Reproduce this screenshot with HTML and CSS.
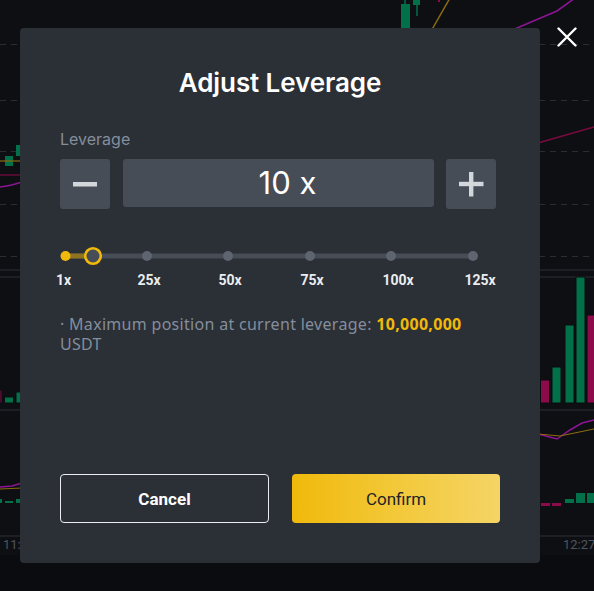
FILE: index.html
```html
<!DOCTYPE html>
<html lang="en">
<head>
<meta charset="utf-8">
<title>Adjust Leverage</title>
<link rel="stylesheet" href="styles.css">
</head>
<body>
<div class="screen">
  <svg class="chart" width="594" height="591" viewBox="0 0 594 591" xmlns="http://www.w3.org/2000/svg">
    <rect x="0" y="0" width="594" height="555" fill="#0e0f13"/>
    <rect x="0" y="555" width="594" height="36" fill="#0b0c0f"/>
    <g stroke="#2a2d33" stroke-width="1" stroke-dasharray="6 5">
      <line x1="0" y1="44.5" x2="594" y2="44.5"/>
      <line x1="0" y1="100.5" x2="594" y2="100.5"/>
      <line x1="0" y1="151.5" x2="594" y2="151.5"/>
      <line x1="0" y1="204.5" x2="594" y2="204.5"/>
      <line x1="0" y1="256.5" x2="594" y2="256.5"/>
    </g>
    <g stroke="#23262c" stroke-width="1.5">
      <line x1="0" y1="270" x2="594" y2="270"/>
      <line x1="0" y1="277" x2="594" y2="277"/>
      <line x1="0" y1="410" x2="594" y2="410"/>
      <line x1="0" y1="536" x2="594" y2="536"/>
    </g>
    <line x1="405" y1="0" x2="405" y2="6" stroke="#02714a" stroke-width="1.5"/>
    <rect x="401" y="4" width="9" height="30" fill="#02714a"/>
    <line x1="417" y1="0" x2="417" y2="16" stroke="#02714a" stroke-width="1.5"/>
    <rect x="413" y="0" width="7" height="5" fill="#02714a"/>
    <rect x="438" y="0" width="2" height="2" fill="#8d0b4b"/>
    <line x1="426" y1="40" x2="450" y2="-2" stroke="#8c6c10" stroke-width="1.5"/>
    <polyline points="500,36 517,28 557,11 575,-2" fill="none" stroke="#8c1594" stroke-width="1.6"/>
    <rect x="5" y="156" width="8" height="10" fill="#02714a"/>
    <rect x="16" y="145" width="6" height="11" fill="#02714a"/>
    <line x1="0" y1="161" x2="22" y2="161" stroke="#8c6c10" stroke-width="1.2"/>
    <line x1="0" y1="175" x2="22" y2="175" stroke="#7c0a42" stroke-width="1.2"/>
    <path d="M0 187 Q10 186 22 182" fill="none" stroke="#8c1594" stroke-width="1.5"/>
    <line x1="538" y1="143" x2="594" y2="127" stroke="#7c0a42" stroke-width="1.5"/>
    <g stroke="#0b0c0f" stroke-width="1">
      <rect x="0" y="390" width="2" height="13" fill="#8d0b4b"/>
      <rect x="4.5" y="397" width="9" height="6" fill="#02714a"/>
      <rect x="16" y="392" width="6" height="11" fill="#02714a"/>
      <rect x="540.5" y="380" width="9" height="23" fill="#8d0b4b"/>
      <rect x="552" y="367" width="9" height="36" fill="#02714a"/>
      <rect x="565" y="325" width="9" height="78" fill="#02714a"/>
      <rect x="576" y="277" width="9" height="126" fill="#02714a"/>
      <rect x="587" y="315" width="9" height="88" fill="#8d0b4b"/>
    </g>
    <path d="M0 487 L12 486 L22 483" fill="none" stroke="#8c1594" stroke-width="1.5"/>
    <path d="M0 489 L22 488" fill="none" stroke="#8c6c10" stroke-width="1.2"/>
    <polyline points="538,434 557,439 570,430 582,423 594,420" fill="none" stroke="#8c1594" stroke-width="1.5"/>
    <polyline points="538,434 560,436 594,429" fill="none" stroke="#8c6c10" stroke-width="1.2"/>
    <rect x="0" y="499" width="2" height="4" fill="#02714a"/>
    <rect x="5" y="501" width="8" height="2" fill="#02714a"/>
    <rect x="16" y="499" width="6" height="4" fill="#02714a"/>
    <rect x="541" y="503" width="9" height="3" fill="#8d0b4b"/>
    <rect x="552" y="503" width="9" height="3" fill="#8d0b4b"/>
    <rect x="565" y="499" width="9" height="4" fill="#02714a"/>
    <rect x="576" y="493" width="9" height="10" fill="#02714a"/>
    <rect x="587" y="493" width="9" height="10" fill="#02714a"/>
    <text x="3" y="549" font-family="Roboto, sans-serif" font-size="13" fill="#4f5560">11:</text>
    <text x="563" y="549" font-family="Roboto, sans-serif" font-size="13" fill="#4f5560">12:27</text>
  </svg>

  <button class="close" type="button" aria-label="Close">
    <svg width="20" height="20" viewBox="0 0 20 20"><path d="M1.5 1.5 L18.5 18.5 M18.5 1.5 L1.5 18.5" stroke="#ffffff" stroke-width="2.4" stroke-linecap="round"/></svg>
  </button>

  <div class="modal">
    <h1 class="title">Adjust Leverage</h1>
    <div class="label">Leverage</div>
    <div class="stepper">
      <button class="step" type="button" aria-label="Decrease">
        <svg width="26" height="26" viewBox="0 0 26 26"><rect x="1" y="11" width="24" height="4.5" fill="#d3d6da"/></svg>
      </button>
      <div class="value">10 x</div>
      <button class="step" type="button" aria-label="Increase">
        <svg width="26" height="26" viewBox="0 0 26 26"><rect x="1" y="10.8" width="24.5" height="4.4" fill="#d3d6da"/><rect x="11" y="1" width="4.4" height="24.5" fill="#d3d6da"/></svg>
      </button>
    </div>
    <div class="slider">
      <svg width="440" height="20" viewBox="0 0 440 20">
        <rect x="1" y="7.5" width="416" height="5" rx="2.5" fill="#474d57"/>
        <rect x="5" y="7.5" width="28" height="5" fill="#8f7420"/>
        <circle cx="87" cy="10" r="5" fill="#5e6570"/>
        <circle cx="168" cy="10" r="5" fill="#5e6570"/>
        <circle cx="250" cy="10" r="5" fill="#5e6570"/>
        <circle cx="331" cy="10" r="5" fill="#5e6570"/>
        <circle cx="413" cy="10" r="5" fill="#5e6570"/>
        <circle cx="5.5" cy="10" r="5" fill="#f0b90b"/>
        <circle cx="33" cy="10" r="7.8" fill="#474d57" stroke="#f0b90b" stroke-width="2.6"/>
      </svg>
    </div>
    <div class="marks">
      <span class="mark" style="left:3.5px">1x</span>
      <span class="mark" style="left:89px">25x</span>
      <span class="mark" style="left:170px">50x</span>
      <span class="mark" style="left:252px">75x</span>
      <span class="mark" style="left:338px">100x</span>
      <span class="mark" style="left:420px">125x</span>
    </div>
    <p class="info">· Maximum position at current leverage: <strong>10,000,000</strong> USDT</p>
    <div class="actions">
      <button class="btn cancel" type="button">Cancel</button>
      <button class="btn confirm" type="button">Confirm</button>
    </div>
  </div>
</div>
</body>
</html>
```

FILE: styles.css
```css
* { box-sizing: border-box; }
html, body { margin: 0; padding: 0; background: #0b0c0f; }
body { font-family: Inter, "Noto Sans", sans-serif; }

.screen {
  position: relative;
  width: 594px;
  height: 591px;
  overflow: hidden;
}

.chart {
  position: absolute;
  left: 0;
  top: 0;
  display: block;
}

.close {
  position: absolute;
  left: 557px;
  top: 27px;
  width: 20px;
  height: 20px;
  padding: 0;
  border: 0;
  background: transparent;
  display: flex;
}

.modal {
  position: absolute;
  left: 20px;
  top: 28px;
  width: 520px;
  height: 535px;
  background: #2b2f36;
  border-radius: 4px;
  padding: 37px 40px 40px;
  display: flex;
  flex-direction: column;
  color: #eaecef;
}

.title {
  margin: 0;
  font-size: 26px;
  line-height: 36px;
  font-weight: 600;
  text-align: center;
  color: #ffffff;
  letter-spacing: -0.1px;
}

.label {
  margin-top: 28px;
  font-size: 16px;
  line-height: 20px;
  color: #848e9c;
}

.stepper {
  margin-top: 10px;
  width: 436px;
  display: flex;
  align-items: flex-start;
  gap: 12px;
}

.step {
  width: 50px;
  height: 50px;
  flex: none;
  padding: 0;
  border: 0;
  border-radius: 3px;
  background: #474d57;
  display: flex;
  align-items: center;
  justify-content: center;
}

.value {
  flex: 1;
  height: 48px;
  margin-left: 1px;
  padding-left: 18px;
  border-radius: 3px;
  background: #474d57;
  color: #ffffff;
  font-size: 31px;
  line-height: 48px;
  text-align: center;
}

.slider {
  margin-top: 37px;
  height: 20px;
}
.slider svg { display: block; }

.marks {
  position: relative;
  height: 18px;
  margin-top: 5px;
}

.mark {
  position: absolute;
  top: 0;
  transform: translateX(-50%);
  font-family: Roboto, Inter, sans-serif;
  font-size: 14px;
  line-height: 18px;
  font-weight: 700;
  color: #eaecef;
  white-space: nowrap;
}

.info {
  margin: 25px 0 0;
  font-family: "Noto Sans", Inter, sans-serif;
  font-size: 16px;
  line-height: 20px;
  letter-spacing: 0.3px;
  color: #848e9c;
}
.info strong {
  color: #f0b90b;
  font-weight: 700;
}

.actions {
  margin-top: auto;
  display: flex;
  gap: 23px;
}

.btn {
  height: 49px;
  border-radius: 4px;
  font-family: Roboto, Inter, sans-serif;
  font-size: 17px;
  padding: 0;
}

.cancel {
  width: 209px;
  background: transparent;
  border: 1px solid #eaecef;
  color: #ffffff;
  font-weight: 700;
}

.confirm {
  width: 208px;
  border: 0;
  background: linear-gradient(90deg, #f0b90b 0%, #f3ca3e 55%, #f5d465 100%);
  color: #1e2329;
  font-weight: 400;
}
```
